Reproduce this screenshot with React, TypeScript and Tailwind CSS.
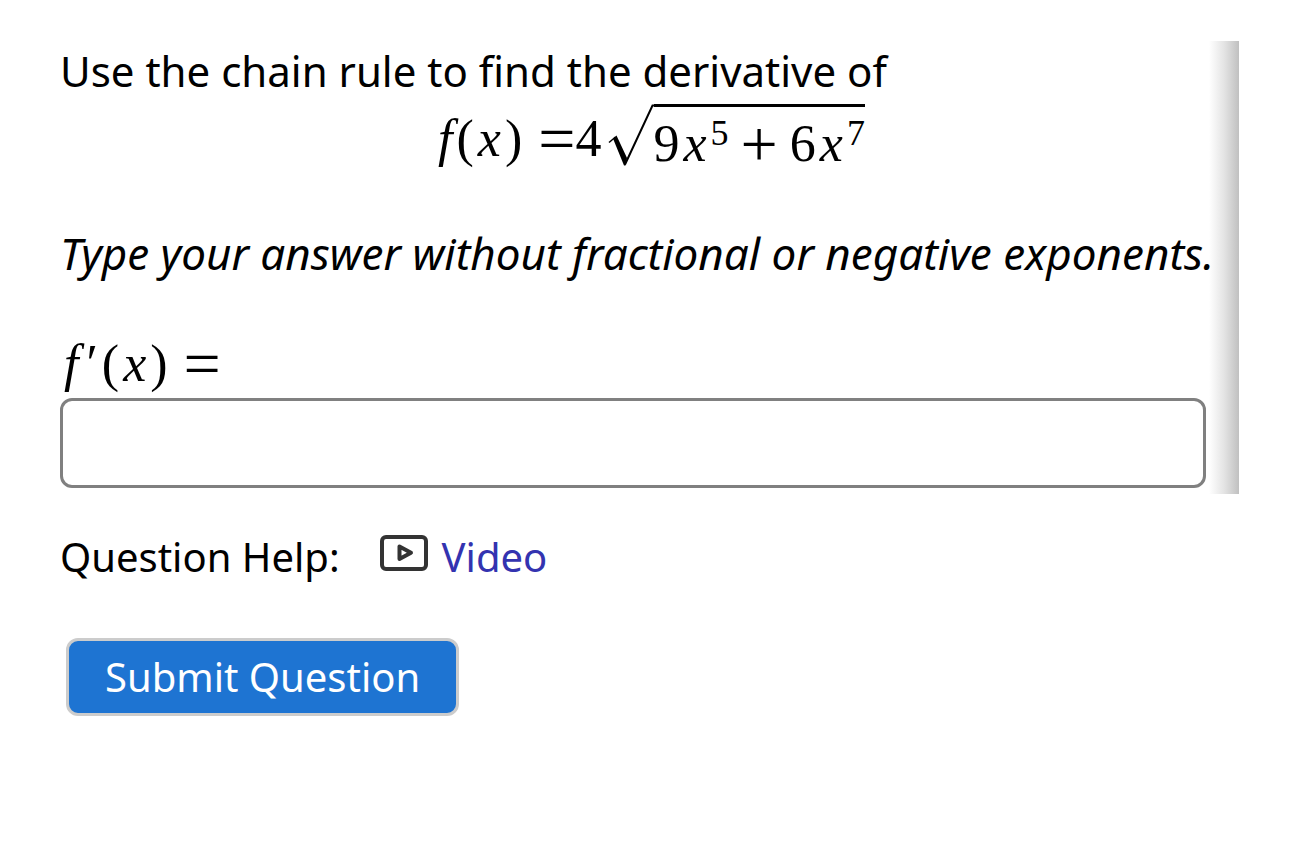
import type { ReactNode } from "react";

function Var({ children }: { children: ReactNode }) {
  return <i className="px-1 italic">{children}</i>;
}

function Op({ children }: { children: ReactNode }) {
  return <span className="text-[66px]">{children}</span>;
}

function Term({ coef, power }: { coef: number; power: number }) {
  return (
    <span className="flex">
      {coef}
      <Var>x</Var>
      <sup className="top-0 -mt-2 text-[36px] leading-[52px]">{power}</sup>
    </span>
  );
}

function Sqrt({ children }: { children: ReactNode }) {
  return (
    <span className="mt-[3px] ml-[6px] flex">
      <svg
        className="h-[64px] w-[46px]"
        viewBox="0 0 46 64"
        fill="none"
        stroke="#000"
        aria-hidden="true"
      >
        <path d="M1 38.5 L7.5 33" strokeWidth="1.5" />
        <path d="M5 34.5 L8.5 31.5 L19 54 L17.5 61.5 L16 61.5 Z" fill="#000" stroke="none" />
        <path d="M17 60.5 L44.5 1.5 H46" strokeWidth="2" />
      </svg>
      <span className="flex items-center gap-3 border-t-3 border-black pt-[3px] leading-[58px]">
        {children}
      </span>
    </span>
  );
}

function VideoIcon() {
  return (
    <svg
      className="mb-2 h-9 w-12"
      viewBox="0 0 48 36"
      fill="none"
      stroke="#333"
      strokeLinejoin="round"
      aria-hidden="true"
    >
      <rect x="2" y="2" width="44" height="32" rx="4" strokeWidth="4" />
      <path d="M19.5 11.5 V24 L31 17.7 Z" strokeWidth="4" />
    </svg>
  );
}

const math = "font-['Liberation_Serif',serif] text-[52px]";

export default function App() {
  return (
    <main className="min-h-screen bg-white py-[41px] pr-[51px] pl-[60px] font-['Noto_Sans',sans-serif] text-[40px] leading-[60px] text-black">
      <section className="bg-[linear-gradient(to_right,#fff,#e4e4e4_50%,#c0c0c0)] bg-[length:30px_100%] bg-right bg-no-repeat pb-[6px]">
        <p className="text-[42px]">Use the chain rule to find the derivative of</p>
        <div className={`flex h-[76px] justify-center leading-[76px] ${math}`}>
          <span className="flex gap-4">
            <span className="flex">
              <Var>f</Var>(<Var>x</Var>)
            </span>
            <Op>=</Op>
          </span>
          4
          <Sqrt>
            <Term coef={9} power={5} />
            <Op>+</Op>
            <Term coef={6} power={7} />
          </Sqrt>
        </div>
        <p className="mt-[46px] text-[44px] whitespace-nowrap italic">
          Type your answer without fractional or negative exponents.
        </p>
        <label htmlFor="answer" className={`mt-[46px] flex h-[69px] gap-4 leading-[69px] ${math}`}>
          <span className="flex">
            <Var>f</Var>
            <span className="px-1">′</span>(<Var>x</Var>)
          </span>
          <Op>=</Op>
        </label>
        <div className="pr-[33px]">
          <input
            id="answer"
            type="text"
            className="block h-[90px] w-full rounded-xl border-3 border-[#808080] bg-white px-4 outline-none"
          />
        </div>
      </section>

      <div className="mt-[33px] flex items-center">
        <span>Question Help:</span>
        <a href="#video" className="ml-10 flex items-center gap-3.5 text-[#3333b0]">
          <VideoIcon />
          Video
        </a>
      </div>

      <button
        type="button"
        className="mt-[51px] ml-[6px] h-[78px] rounded-xl border-3 border-[#ccc] bg-[#1e74d2] px-9 text-white"
      >
        Submit Question
      </button>
    </main>
  );
}
